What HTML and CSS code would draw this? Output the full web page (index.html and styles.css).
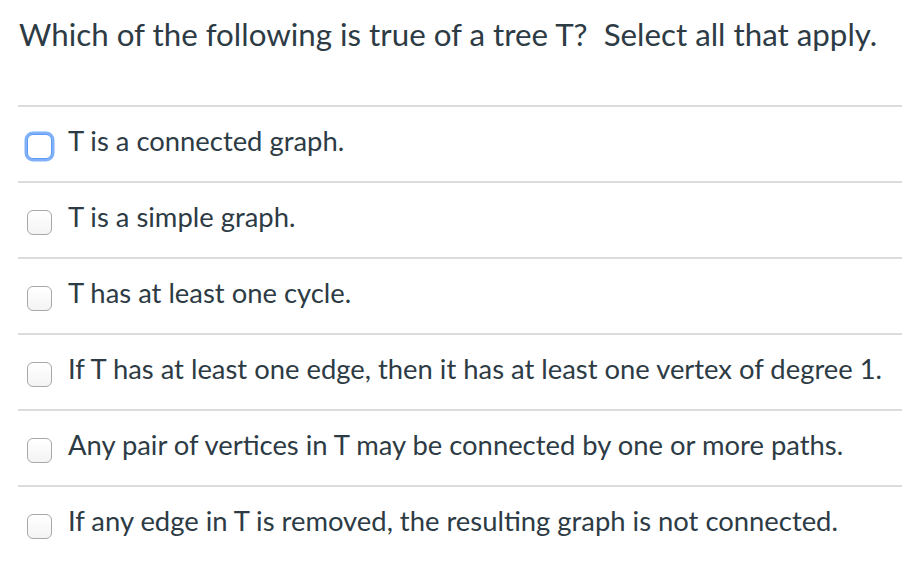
FILE: index.html
```html
<!DOCTYPE html>
<html>
<head>
<meta charset="utf-8">
<link rel="stylesheet" href="styles.css">
</head>
<body>
<div class="question">
  <h1 class="prompt">Which of the following is true of a tree T? &nbsp;Select all that apply.</h1>
  <ul class="answers">
    <li class="answer"><span class="box focused"></span><span class="label">T is a connected graph.</span></li>
    <li class="answer"><span class="box"></span><span class="label">T is a simple graph.</span></li>
    <li class="answer"><span class="box"></span><span class="label">T has at least one cycle.</span></li>
    <li class="answer"><span class="box"></span><span class="label">If T has at least one edge, then it has at least one vertex of degree 1.</span></li>
    <li class="answer"><span class="box"></span><span class="label">Any pair of vertices in T may be connected by one or more paths.</span></li>
    <li class="answer"><span class="box"></span><span class="label">If any edge in T is removed, the resulting graph is not connected.</span></li>
  </ul>
</div>
</body>
</html>
```

FILE: styles.css
```css
html, body {
  margin: 0;
  padding: 0;
  background: #fff;
}
body {
  font-family: Lato, "Liberation Sans", sans-serif;
  color: #2d3b45;
}
.question {
  padding-left: 18px;
}
.prompt {
  margin: 0;
  padding: 14px 0 0 1px;
  font-size: 31.3px;
  font-weight: 400;
  line-height: 40px;
  height: 91px;
  white-space: nowrap;
}
.answers {
  list-style: none;
  margin: 0;
  padding: 0;
}
.answer {
  display: flex;
  align-items: flex-start;
  border-top: 2px solid #dcdcdc;
  padding: 17px 0 24px 9px;
  height: 33px;
}
.box {
  flex: none;
  box-sizing: border-box;
  width: 25px;
  height: 25px;
  margin-top: 10px;
  border: 1px solid #a8a8a8;
  border-radius: 6px;
  background: linear-gradient(#ffffff, #f4f4f4);
}
.box.focused {
  border: 1.5px solid #5d9bf4;
  box-shadow: 0 0 0 2.5px #7fb0f8;
  background: #fff;
}
.label {
  margin-left: 16px;
  font-size: 27.4px;
  line-height: 33px;
  white-space: nowrap;
}
```
